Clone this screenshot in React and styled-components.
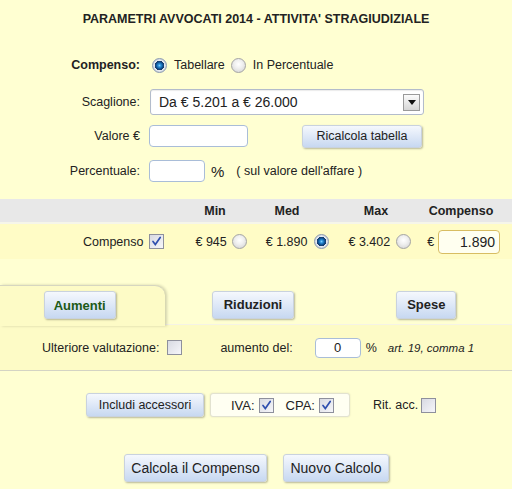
import React from "react";
import styled, { createGlobalStyle, css } from "styled-components";

const Global = createGlobalStyle`
  html, body { margin: 0; padding: 0; }
  body {
    background: #ffffd2;
    font-family: "Liberation Sans", Arial, sans-serif;
    color: #222;
    font-size: 12.5px;
  }
`;

const Page = styled.div`
  width: 512px;
  height: 489px;
  overflow: hidden;
  display: flex;
  flex-direction: column;
`;

const Title = styled.h1`
  margin: 12px 0 0;
  font-size: 12.5px;
  line-height: 15px;
  font-weight: bold;
  text-align: center;
  color: #222;
`;

const FormRow = styled.div`
  display: flex;
  align-items: center;
  height: ${(p) => p.$h || 26}px;
  margin-top: ${(p) => p.$mt || 0}px;
`;

const Label = styled.span`
  width: 140px;
  text-align: right;
  flex: none;
  font-weight: ${(p) => (p.$bold ? "bold" : "normal")};
  margin-right: ${(p) => p.$mr ?? 9}px;
`;

const Inline = styled.span`
  display: inline-flex;
  align-items: center;
  margin-left: ${(p) => p.$ml || 0}px;
  font-style: ${(p) => (p.$italic ? "italic" : "normal")};
  font-size: ${(p) => p.$fs || 12.5}px;
  color: ${(p) => p.$color || "inherit"};
`;

const Radio = styled.span`
  display: inline-block;
  box-sizing: border-box;
  width: 15px;
  height: 15px;
  border-radius: 50%;
  border: 1px solid #a4a4a4;
  background: radial-gradient(circle at 50% 40%, #ffffff 0, #f0f0f0 40%, #cfcfcf 100%);
  flex: none;
  margin-left: ${(p) => p.$ml || 0}px;
  ${(p) =>
    p.$checked &&
    css`
      border-color: #8a9ab0;
      background: radial-gradient(
        circle at 50% 50%,
        #7fd0ff 0,
        #2a8fd8 1.5px,
        #0d4c8c 3.5px,
        #1a3a66 4.5px,
        #e6ebf2 5px,
        #c8ced8 7px
      );
    `}
`;

const CheckBox = styled.span`
  display: inline-flex;
  align-items: center;
  justify-content: center;
  box-sizing: border-box;
  width: 15px;
  height: 15px;
  border: 1px solid #8e909c;
  background: linear-gradient(135deg, #d8dae2 0%, #f6f6fa 100%);
  flex: none;
  margin-left: ${(p) => p.$ml || 0}px;
`;

const Check = ({ checked, ml }) => (
  <CheckBox $ml={ml}>
    {checked && (
      <svg width="11" height="11" viewBox="0 0 11 11">
        <path d="M2 5.5 L4.3 8.5 L9.2 1.5" stroke="#2f4fae" strokeWidth="1.7" fill="none" strokeLinecap="round" />
      </svg>
    )}
  </CheckBox>
);

const Select = styled.div`
  box-sizing: border-box;
  width: 274px;
  height: 26px;
  background: #fff;
  border: 1px solid #b3bccb;
  border-radius: 3px;
  box-shadow: inset 0 1px 1px rgba(0, 0, 0, 0.08);
  display: flex;
  align-items: center;
  justify-content: space-between;
  padding: 0 3px 0 8px;
  font-size: 14px;
  color: #222;
`;

const Arrow = styled.span`
  box-sizing: border-box;
  width: 17px;
  height: 17px;
  border: 1px solid #9a9a9a;
  background: linear-gradient(#fbfbfb, #d6d6d6);
  display: flex;
  align-items: center;
  justify-content: center;
`;

const TextInput = styled.div`
  box-sizing: border-box;
  width: ${(p) => p.$w}px;
  height: ${(p) => p.$h || 22}px;
  background: ${(p) => (p.$gold ? "#fffff0" : "#fff")};
  border: 1px solid ${(p) => (p.$gold ? "#d8bd62" : "#a9bdd8")};
  border-radius: 4px;
  display: flex;
  align-items: center;
  justify-content: ${(p) => p.$align || "flex-start"};
  padding: 0 4px;
  font-size: ${(p) => p.$fs || 13}px;
  margin-left: ${(p) => p.$ml || 0}px;
  flex: none;
`;

const Button = styled.div`
  box-sizing: border-box;
  display: inline-flex;
  align-items: center;
  justify-content: center;
  width: ${(p) => p.$w}px;
  height: ${(p) => p.$h || 23}px;
  background: linear-gradient(#f5f8fd, #c7d8f1);
  border: 1px solid #c9d2de;
  border-radius: 3px;
  box-shadow: 1px 1px 2px rgba(0, 0, 0, 0.28);
  font-size: ${(p) => p.$fs || 12.5}px;
  font-weight: ${(p) => (p.$bold ? "bold" : "normal")};
  color: ${(p) => p.$color || "#222"};
  margin-left: ${(p) => p.$ml || 0}px;
  flex: none;
`;

const HeaderBand = styled.div`
  margin-top: 15px;
  height: 23px;
  background: #e8e8e8;
  border-bottom: 2px solid #f6f6ea;
  display: grid;
  grid-template-columns: 190px 50px 94px 84px 86px;
  align-items: center;
  font-weight: bold;
  font-size: 12.5px;
`;

const HeadCell = styled.span`
  text-align: center;
`;

const ValueRow = styled.div`
  height: 35px;
  background: #fffcc6;
  display: flex;
  align-items: center;
  padding-left: 83px;
`;

const TabStrip = styled.div`
  margin-top: 26px;
  height: 39px;
  display: flex;
  gap: 8px;
  position: relative;
`;

const Tab = styled.div`
  box-sizing: border-box;
  width: 166px;
  height: 39px;
  display: flex;
  align-items: center;
  justify-content: center;
  padding-right: 6px;
  ${(p) =>
    p.$active &&
    css`
      background: #fdfbc6;
      border-top: 1px solid #d6d6c0;
      border-top-right-radius: 10px;
      box-shadow: 2px 0 3px rgba(0, 0, 0, 0.18);
      position: relative;
      z-index: 1;
      height: 41px;
      padding-bottom: 2px;
    `}
`;

const Panel = styled.div`
  height: 45px;
  background: #fdfbc6;
  border-top: 1px solid #f5f3e6;
  border-bottom: 1px solid #d4d4c4;
  display: flex;
  align-items: center;
  padding-left: 42px;
`;

const AccRow = styled.div`
  margin-top: 22px;
  display: flex;
  align-items: center;
  padding-left: 86px;
  height: 24px;
`;

const AccBox = styled.div`
  box-sizing: border-box;
  width: 140px;
  height: 24px;
  margin-left: 6px;
  background: #fffff2;
  border: 1px solid #e2e2d0;
  border-radius: 3px;
  box-shadow: 0 0 2px rgba(0, 0, 0, 0.12);
  display: flex;
  align-items: center;
  padding-left: 20px;
  font-size: 13px;
`;

const Actions = styled.div`
  margin-top: 37px;
  display: flex;
  justify-content: center;
  gap: 16px;
  padding-left: 1px;
`;

export default function App() {
  return (
    <Page>
      <Global />
      <Title>PARAMETRI AVVOCATI 2014 - ATTIVITA' STRAGIUDIZIALE</Title>

      <FormRow $mt={25}>
        <Label $bold $mr={12}>Compenso:</Label>
        <Radio $checked />
        <Inline $ml={7}>Tabellare</Inline>
        <Radio $ml={6} />
        <Inline $ml={7}>In Percentuale</Inline>
      </FormRow>

      <FormRow $mt={11}>
        <Label $mr={10}>Scaglione:</Label>
        <Select>
          <span>Da € 5.201 a € 26.000</span>
          <Arrow>
            <svg width="8" height="5" viewBox="0 0 8 5">
              <path d="M0 0 H8 L4 5 Z" fill="#111" />
            </svg>
          </Arrow>
        </Select>
      </FormRow>

      <FormRow $mt={8}>
        <Label>Valore €</Label>
        <TextInput $w={99} />
        <Button $w={120} $ml={54}>Ricalcola tabella</Button>
      </FormRow>

      <FormRow $mt={9}>
        <Label>Percentuale:</Label>
        <TextInput $w={56} />
        <Inline $ml={6} $fs={15}>%</Inline>
        <Inline $ml={12}>( sul valore dell'affare )</Inline>
      </FormRow>

      <HeaderBand>
        <span />
        <HeadCell>Min</HeadCell>
        <HeadCell>Med</HeadCell>
        <HeadCell>Max</HeadCell>
        <HeadCell>Compenso</HeadCell>
      </HeaderBand>

      <ValueRow>
        <Inline>Compenso</Inline>
        <Check checked ml={6} />
        <Inline $ml={31}>€ 945</Inline>
        <Radio $ml={5} />
        <Inline $ml={19}>€ 1.890</Inline>
        <Radio $ml={7} $checked />
        <Inline $ml={19}>€ 3.402</Inline>
        <Radio $ml={6} />
        <Inline $ml={16}>€</Inline>
        <TextInput $w={62} $h={24} $gold $align="flex-end" $fs={14} $ml={4}>1.890</TextInput>
      </ValueRow>

      <TabStrip>
        <Tab $active>
          <Button $w={72} $h={28} $bold $color="#1d5a16" $fs={13}>Aumenti</Button>
        </Tab>
        <Tab>
          <Button $w={82} $h={28} $bold $fs={13}>Riduzioni</Button>
        </Tab>
        <Tab>
          <Button $w={60} $h={28} $bold $fs={13}>Spese</Button>
        </Tab>
      </TabStrip>

      <Panel>
        <Inline>Ulteriore valutazione:</Inline>
        <Check ml={8} />
        <Inline $ml={38}>aumento del:</Inline>
        <TextInput $w={46} $h={20} $align="center" $fs={13} $ml={22}>0</TextInput>
        <Inline $ml={5}>%</Inline>
        <Inline $ml={11} $italic $fs={11.5}>art. 19, comma 1</Inline>
      </Panel>

      <AccRow>
        <Button $w={118} $h={24}>Includi accessori</Button>
        <AccBox>
          <span>IVA:</span>
          <Check checked ml={4} />
          <Inline $ml={12} $fs={13}>CPA:</Inline>
          <Check checked ml={4} />
        </AccBox>
        <Inline $ml={23}>Rit. acc.</Inline>
        <Check ml={3} />
      </AccRow>

      <Actions>
        <Button $w={143} $h={28} $fs={14}>Calcola il Compenso</Button>
        <Button $w={106} $h={28} $fs={14}>Nuovo Calcolo</Button>
      </Actions>
    </Page>
  );
}
